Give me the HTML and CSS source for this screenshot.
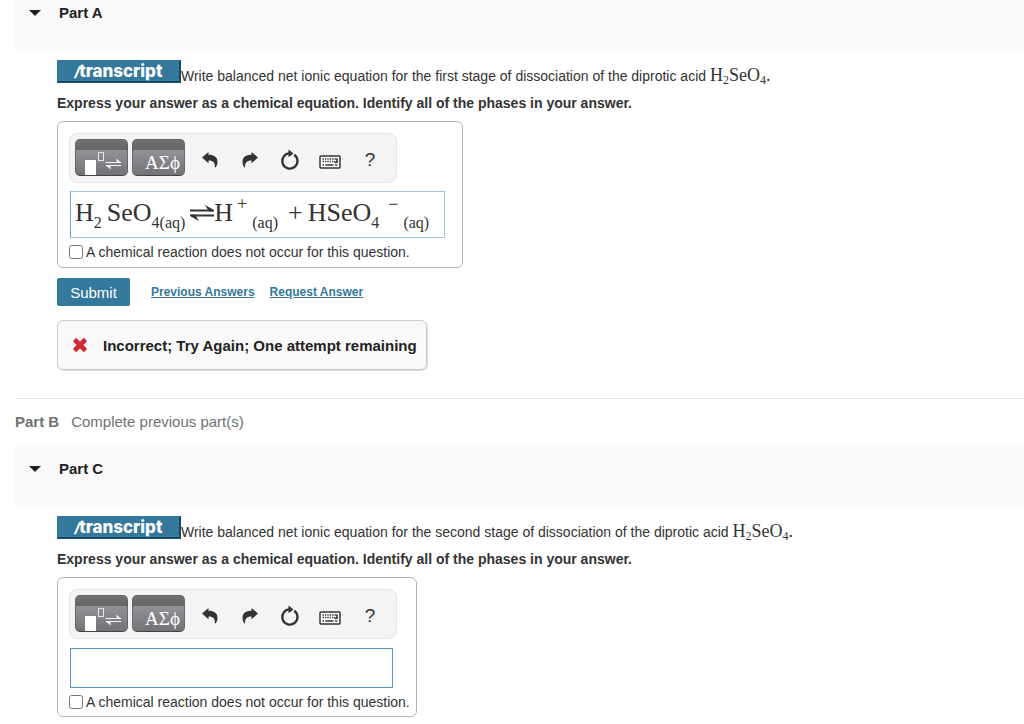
FILE: index.html
```html
<!DOCTYPE html>
<html lang="en">
<head>
  <meta charset="UTF-8" />
  <meta name="viewport" content="width=device-width, initial-scale=1.0"/>
  <title>Dissociation of a Diprotic Acid</title>
  <link rel="stylesheet" href="styles.css">
</head>
<body>
  <svg class="defs" aria-hidden="true">
    <symbol id="icon-template" viewBox="0 0 51 35">
      <rect x="9" y="20" width="11" height="15" fill="#fff"/>
      <rect x="22.5" y="12.5" width="5" height="8" fill="none" stroke="#e4e4e6"/>
      <path d="M29.500 22.500H45M45 25.500H30" fill="none" stroke="#f4f4f6" stroke-width="1.200"/>
      <path d="M40 18.500L45.500 22.800H41ZM35 29.500L29.500 25.200H34Z" fill="#f4f4f6"/>
    </symbol>
    <symbol id="icon-undo" viewBox="0 0 16 16">
      <path d="M0 5.500L6.500 0V2.800C12 2.800 15.500 5.300 15.500 10C15.500 12.500 14.500 14.500 13 16C13.200 11 11.500 8.600 6.500 8.600V11.200Z"/>
    </symbol>
    <symbol id="icon-redo" viewBox="0 0 16 16">
      <path d="M16 5.500L9.500 0V2.800C4 2.800 0.500 5.300 0.500 10C0.500 12.500 1.500 14.500 3 16C2.800 11 4.500 8.600 9.500 8.600V11.200Z"/>
    </symbol>
    <symbol id="icon-reset" viewBox="0 0 20 22">
      <path d="M14.300 5.800A7.600 7.600 0 1 1 9.500 4.400" fill="none" stroke="#333" stroke-width="2.300"/>
      <path d="M8.500 0.500L13.500 4.400L8.500 8.300Z"/>
    </symbol>
    <symbol id="icon-keyboard" viewBox="0 0 22 14">
      <rect x="1" y="1" width="20" height="12" rx="1" fill="#fff" stroke="#333" stroke-width="1.500"/>
      <path d="M3.500 4H17M3.500 6.500H16" fill="none" stroke="#333" stroke-width="1.400" stroke-dasharray="1.400 1"/>
      <path d="M18 3.300V7.200H15.500M3.500 10H5M6.500 10H14.500M16 10H18.500" fill="none" stroke="#333" stroke-width="1.600"/>
    </symbol>
    <symbol id="icon-wrong" viewBox="0 0 16 16">
      <path d="M2.500 2.500L13.500 13.500M13.500 2.500L2.500 13.500" fill="none" stroke="#cf2a2e" stroke-width="4.600"/>
    </symbol>
    <symbol id="icon-equilibrium" viewBox="0 0 24 16">
      <path d="M0 5.500H23M24 10.500H1" fill="none" stroke="#333" stroke-width="1.800"/>
      <path d="M15 0L24 5V6.400H19ZM9 16L0 11V9.600H5Z"/>
    </symbol>
  </svg>

  <main class="assignment">
    <section>
      <header class="part-header part-header-top">
        <span class="caret"></span>
        <h2>Part A</h2>
      </header>
      <div class="part-body">
        <div class="question">
          <button class="transcript"><i>/</i>transcript</button>
          <p>Write balanced net ionic equation for the first stage of dissociation of the diprotic acid <span class="formula">H<sub>2</sub>SeO<sub>4</sub>.</span></p>
        </div>
        <p class="instructions">Express your answer as a chemical equation. Identify all of the phases in your answer.</p>
        <div class="answer-box answer-box-wide">
          <div class="toolbar">
            <button class="palette" aria-label="Templates"><svg><use href="#icon-template"/></svg></button>
            <button class="palette greek">ΑΣϕ</button>
            <div class="tools">
              <button aria-label="Undo"><svg width="16" height="16"><use href="#icon-undo"/></svg></button>
              <button aria-label="Redo"><svg width="16" height="16"><use href="#icon-redo"/></svg></button>
              <button aria-label="Reset"><svg width="20" height="22"><use href="#icon-reset"/></svg></button>
              <button class="keyboard" aria-label="Keyboard"><svg width="22" height="14"><use href="#icon-keyboard"/></svg></button>
              <button aria-label="Help">?</button>
            </div>
          </div>
          <div class="equation" role="textbox" aria-label="Answer for Part A" contenteditable="true" spellcheck="false"><span>H<sub>2</sub></span><span>SeO<sub>4(aq)</sub></span><span><svg width="24" height="16"><use href="#icon-equilibrium"/></svg>H<sup>+</sup></span><sub>(aq)</sub><span class="plus">+</span><span>HSeO<sub>4</sub></span><span><sup>−</sup></span><sub>(aq)</sub></div>
          <label class="no-reaction"><input type="checkbox"> A chemical reaction does not occur for this question.</label>
        </div>
        <div class="actions">
          <button class="submit">Submit</button>
          <a href="#">Previous Answers</a>
          <a href="#">Request Answer</a>
        </div>
        <div class="feedback">
          <svg width="16" height="16"><use href="#icon-wrong"/></svg>
          <span>Incorrect; Try Again; One attempt remaining</span>
        </div>
      </div>
    </section>

    <section class="part-locked">
      <h2>Part B</h2>
      <span>Complete previous part(s)</span>
    </section>

    <section>
      <header class="part-header">
        <span class="caret"></span>
        <h2>Part C</h2>
      </header>
      <div class="part-body">
        <div class="question">
          <button class="transcript"><i>/</i>transcript</button>
          <p>Write balanced net ionic equation for the second stage of dissociation of the diprotic acid <span class="formula">H<sub>2</sub>SeO<sub>4</sub>.</span></p>
        </div>
        <p class="instructions">Express your answer as a chemical equation. Identify all of the phases in your answer.</p>
        <div class="answer-box">
          <div class="toolbar">
            <button class="palette" aria-label="Templates"><svg><use href="#icon-template"/></svg></button>
            <button class="palette greek">ΑΣϕ</button>
            <div class="tools">
              <button aria-label="Undo"><svg width="16" height="16"><use href="#icon-undo"/></svg></button>
              <button aria-label="Redo"><svg width="16" height="16"><use href="#icon-redo"/></svg></button>
              <button aria-label="Reset"><svg width="20" height="22"><use href="#icon-reset"/></svg></button>
              <button class="keyboard" aria-label="Keyboard"><svg width="22" height="14"><use href="#icon-keyboard"/></svg></button>
              <button aria-label="Help">?</button>
            </div>
          </div>
          <input class="answer-input" type="text" aria-label="Answer for Part C">
          <label class="no-reaction"><input type="checkbox"> A chemical reaction does not occur for this question.</label>
        </div>
      </div>
    </section>
  </main>
</body>
</html>
```

FILE: styles.css
```css
* {
  box-sizing: border-box;
}

body {
  margin: 0;
  background-color: #fff;
  color: #333;
  font-family: "Liberation Sans", Arial, sans-serif;
  font-size: 14px;
}

h2, p {
  margin: 0;
}

button {
  font-family: inherit;
  cursor: pointer;
}

sub, sup {
  line-height: 0;
}

.defs {
  display: none;
}

.assignment {
  margin-left: 15px;
}

/* part headings */
.part-header {
  display: flex;
  align-items: flex-start;
  gap: 18px;
  height: 60px;
  padding: 15px 14px;
  background-color: #f9f9f9;
}

.part-header-top {
  height: 49px;
  padding-top: 4px;
}

.part-header h2,
.part-locked h2 {
  font-size: 15px;
  line-height: 17px;
}

.part-header h2 {
  color: #222;
}

.caret {
  margin-top: 6px;
  border: 6px solid transparent;
  border-top-color: #222;
  border-bottom: 0;
}

.part-body {
  padding: 11px 16px 0 42px;
}

.question {
  display: flex;
  align-items: flex-end;
}

.question p {
  line-height: 14px;
}

.transcript {
  flex: none;
  width: 124px;
  height: 23px;
  padding: 0;
  border: 1px solid #34799b;
  border-right: 2px solid #174a62;
  border-bottom: 2px solid #174a62;
  background-color: #34799b;
  color: #fff;
  font-family: Inter, sans-serif;
  font-size: 17px;
  font-weight: 800;
  line-height: 18px;
}

.transcript i {
  margin-right: -1px;
  font-size: 14px;
}

.formula {
  font-family: "Liberation Serif", serif;
  font-size: 18px;
}

.formula sub {
  font-size: 12px;
  vertical-align: -3px;
}

.instructions {
  margin-top: 12px;
  font-weight: bold;
  line-height: 16px;
}

/* answer entry */
.answer-box {
  width: fit-content;
  margin-top: 10px;
  padding: 11px 6px 6px 11px;
  border: 1px solid #b5b5b5;
  border-radius: 6px;
}

.answer-box-wide {
  padding-right: 17px;
  padding-bottom: 7px;
}

.toolbar {
  display: flex;
  gap: 4px;
  width: 328px;
  height: 50px;
  padding: 5px;
  border: 1px solid #e4e4e4;
  border-radius: 8px;
  background-color: #f4f4f4;
}

.palette {
  width: 53px;
  height: 37px;
  padding: 0;
  border: 1px solid #666669;
  border-bottom-color: #444;
  border-radius: 5px;
  background: linear-gradient(#737373 0, #646464 10px, #929298 10px, #737377 100%);
  color: #fff;
}

.palette svg {
  display: block;
  width: 51px;
  height: 35px;
}

.greek {
  padding: 11px 0 0 8px;
  font-family: "Liberation Serif", serif;
  font-size: 19px;
  line-height: 22px;
}

.tools {
  display: grid;
  grid-template-columns: repeat(5, 40px);
  height: 42px;
  margin-left: 1px;
}

.tools button {
  display: flex;
  align-items: center;
  justify-content: center;
  padding: 0;
  border: 0;
  background: none;
  color: #333;
  font-size: 19px;
}

.tools svg,
.equation svg {
  fill: #333;
}

.tools .keyboard {
  padding-top: 3px;
}

.equation {
  display: flex;
  align-items: baseline;
  gap: 5px;
  height: 47px;
  margin: 8px 0 0 1px;
  padding: 6px 15px 0 4px;
  border: 1px solid #9ec5d8;
  border-left-color: #6ba3be;
  font-family: "Liberation Serif", serif;
  font-size: 26px;
  line-height: 30px;
}

.equation sub {
  position: relative;
  top: 7px;
  font-size: 16px;
  vertical-align: baseline;
}

.equation sup {
  margin-left: 4px;
  font-size: 18px;
  vertical-align: 11px;
}

.plus {
  margin-left: 5px;
}

.answer-input {
  display: block;
  width: 323px;
  height: 40px;
  margin: 9px 0 0 1px;
  padding: 0 5px;
  border: 1px solid #5598b8;
  font-family: "Liberation Serif", serif;
  font-size: 26px;
}

.no-reaction {
  display: flex;
  align-items: center;
  gap: 3px;
  margin-top: 6px;
  line-height: 16px;
}

.no-reaction input {
  width: 14px;
  height: 14px;
  margin: 0;
}

/* submit row */
.actions {
  display: flex;
  align-items: center;
  margin-top: 10px;
}

.submit {
  width: 73px;
  height: 28px;
  margin-right: 21px;
  padding: 0;
  border: 0;
  border-radius: 2px;
  background-color: #34799b;
  color: #fff;
  font-size: 15px;
}

.actions a {
  margin-right: 15px;
  color: #34799b;
  font-size: 12px;
  font-weight: bold;
}

.feedback {
  display: flex;
  align-items: center;
  gap: 15px;
  width: fit-content;
  height: 50px;
  margin-top: 14px;
  padding: 0 9px 0 14px;
  border: 1px solid #ccc;
  border-radius: 6px;
  background-color: #f9f9f9;
  box-shadow: 1px 1px 1px #ddd;
  color: #222;
  font-size: 15px;
  font-weight: bold;
}

.part-locked {
  display: flex;
  gap: 12px;
  height: 47px;
  margin-top: 28px;
  padding-top: 14px;
  border-top: 1px solid #e2e2e2;
  color: #6e7372;
  font-size: 15px;
  line-height: 17px;
}
```
